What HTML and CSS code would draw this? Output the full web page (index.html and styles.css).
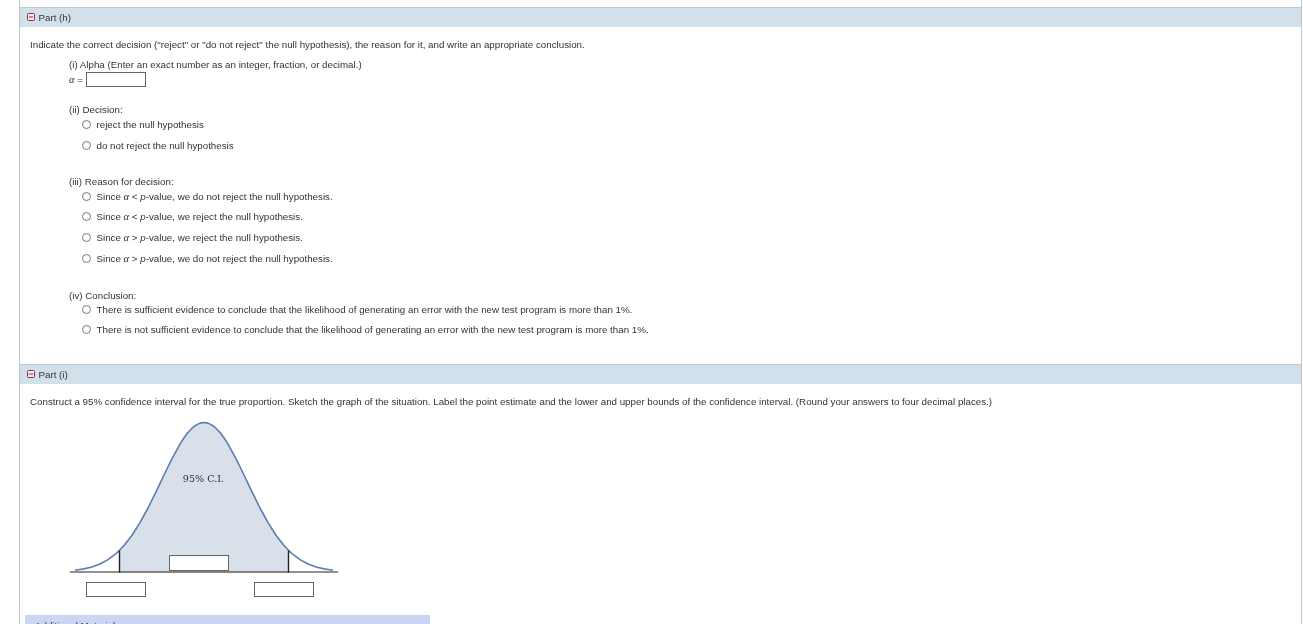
FILE: index.html
```html
<!DOCTYPE html>
<html lang="en">
<head>
<meta charset="utf-8">
<title>Part (h) and Part (i)</title>
<link rel="stylesheet" href="styles.css">
</head>
<body>
<main class="sheet">
  <section class="part part-h">
    <header class="part-head">
      <svg class="toggle" viewBox="0 0 8 8" aria-hidden="true"><rect x=".5" y=".5" width="7" height="7" rx="1" fill="#f4e9ec" stroke="#8c2f3f"/><rect x="2" y="3.5" width="4" height="1" fill="#8c2f3f"/></svg>
      <span>Part (h)</span>
    </header>
    <p class="lead">Indicate the correct decision ("reject" or "do not reject" the null hypothesis), the reason for it, and write an appropriate conclusion.</p>
    <div class="block block-alpha">
      <div class="label">(i) Alpha (Enter an exact number as an integer, fraction, or decimal.)</div>
      <div class="alpha-row"><i class="greek">α</i> = <span class="box"></span></div>
    </div>
    <div class="block block-decision">
      <div class="label">(ii) Decision:</div>
      <div class="opt"><span class="radio"></span>reject the null hypothesis</div>
      <div class="opt"><span class="radio"></span>do not reject the null hypothesis</div>
    </div>
    <div class="block block-reason">
      <div class="label">(iii) Reason for decision:</div>
      <div class="opt"><span class="radio"></span>Since&nbsp;<i class="greek">α</i>&nbsp;&lt;&nbsp;<i>p</i>-value, we do not reject the null hypothesis.</div>
      <div class="opt"><span class="radio"></span>Since&nbsp;<i class="greek">α</i>&nbsp;&lt;&nbsp;<i>p</i>-value, we reject the null hypothesis.</div>
      <div class="opt"><span class="radio"></span>Since&nbsp;<i class="greek">α</i>&nbsp;&gt;&nbsp;<i>p</i>-value, we reject the null hypothesis.</div>
      <div class="opt"><span class="radio"></span>Since&nbsp;<i class="greek">α</i>&nbsp;&gt;&nbsp;<i>p</i>-value, we do not reject the null hypothesis.</div>
    </div>
    <div class="block block-conclusion">
      <div class="label">(iv) Conclusion:</div>
      <div class="opt"><span class="radio"></span>There is sufficient evidence to conclude that the likelihood of generating an error with the new test program is more than 1%.</div>
      <div class="opt"><span class="radio"></span>There is not sufficient evidence to conclude that the likelihood of generating an error with the new test program is more than 1%.</div>
    </div>
  </section>
  <section class="part part-i">
    <header class="part-head">
      <svg class="toggle" viewBox="0 0 8 8" aria-hidden="true"><rect x=".5" y=".5" width="7" height="7" rx="1" fill="#f4e9ec" stroke="#8c2f3f"/><rect x="2" y="3.5" width="4" height="1" fill="#8c2f3f"/></svg>
      <span>Part (i)</span>
    </header>
    <p class="lead">Construct a 95% confidence interval for the true proportion. Sketch the graph of the situation. Label the point estimate and the lower and upper bounds of the confidence interval. (Round your answers to four decimal places.)</p>
    <div class="graph">
      <svg class="curve" viewBox="0 0 290 170" aria-hidden="true">
        <polygon points="59.500,155 59.500,133.300 64,128.500 72,118.200 80,105.600 88,91 96,74.800 104,58 112,41.700 120,27.100 124,20.800 128,15.500 132,11.200 136,8.100 140,6.100 144,5.500 148,6.100 152,8.100 156,11.200 160,15.500 164,20.800 168,27.100 176,41.700 184,58 192,74.800 200,91 208,105.600 216,118.200 224,128.500 228.500,133.300 228.500,155" fill="#d8e0ea"/>
        <polyline points="15,153.300 24,151.900 32,150 40,147 48,142.600 56,136.600 59.500,133.300 64,128.500 72,118.200 80,105.600 88,91 96,74.800 104,58 112,41.700 120,27.100 124,20.800 128,15.500 132,11.200 136,8.100 140,6.100 144,5.500 148,6.100 152,8.100 156,11.200 160,15.500 164,20.800 168,27.100 176,41.700 184,58 192,74.800 200,91 208,105.600 216,118.200 224,128.500 228.500,133.300 232,136.600 240,142.600 248,147 256,150 264,151.900 273,153.300" fill="none" stroke="#5b7db1" stroke-width="1.600" stroke-linejoin="round"/>
        <path d="M60 155.800H228" stroke="#efe6c8" stroke-width="1"/>
        <path d="M10 155H278" stroke="#222" stroke-width="1"/>
        <path d="M59.500 133.500V155.500M228.500 133.500V155.500" stroke="#222" stroke-width="1.400"/>
        <text x="143.500" y="65" text-anchor="middle" class="ci">95% C.I.</text>
      </svg>
      <span class="box box-mid"></span>
      <span class="box box-low"></span>
      <span class="box box-high"></span>
    </div>
    <aside class="materials">Additional Materials</aside>
  </section>
</main>
</body>
</html>
```
FILE: styles.css
```css
html, body { margin: 0; padding: 0; height: 624px; overflow: hidden; background: #fff; }
body { font-family: "Liberation Sans", Arial, sans-serif; font-size: 9.75px; line-height: 11px; color: #333; }
.sheet { margin-left: 19px; width: 1283px; height: 624px; box-sizing: border-box; border-left: 1px solid #c4c4c4; border-right: 1px solid #c4c4c4; padding-top: 7px; overflow: hidden; filter: blur(.3px); }
.part-head { display: flex; align-items: center; height: 18px; background: #d2e0eb; border-top: 1px solid #c2c8cc; padding: 0 0 1px 6.500px; gap: 4px; }
.toggle { width: 8px; height: 8px; flex: none; }
.lead { margin: 0; padding-left: 10px; }
.part-h .lead { padding-top: 12px; }
.block { padding-left: 49px; }
.block-alpha { margin-top: 9px; }
.alpha-row { display: flex; align-items: center; height: 15px; margin-top: 2px; white-space: pre; }
.greek { font-family: "Liberation Serif", serif; font-size: 10.500px; }
.box { display: block; box-sizing: border-box; width: 60px; height: 15px; background: #fff; border: 1px solid #666; }
.alpha-row .box { margin-left: 0; }
.block-decision { margin-top: 17px; }
.block-reason { margin-top: 25px; }
.block-conclusion { margin-top: 26px; }
.opt { display: flex; align-items: center; height: 11px; margin-top: 9.700px; padding-left: 12.500px; white-space: pre; }
.label + .opt { margin-top: 4px; }
.block-conclusion .label + .opt { margin-top: 3px; }
.radio { box-sizing: border-box; width: 9px; height: 9px; border: 1px solid #777; border-radius: 50%; background: #fff; margin-right: 6px; flex: none; }
.part-i { margin-top: 29px; }
.part-i .lead { padding-top: 12px; }
.graph { position: relative; height: 170px; width: 340px; margin-top: 10px; }
.curve { position: absolute; left: 40px; top: 0; width: 290px; height: 170px; }
.ci { font-family: "DejaVu Serif", serif; font-size: 9.600px; fill: #333; }
.box-mid, .box-low, .box-high { position: absolute; }
.box-mid { left: 149px; top: 138px; height: 16px; }
.box-low { left: 66px; top: 165px; }
.box-high { left: 234px; top: 165px; }
.materials { box-sizing: border-box; width: 405px; height: 24px; margin-left: 5px; margin-top: 28px; padding: 5px 0 0 10px; background: #ccd5f3; }
```
